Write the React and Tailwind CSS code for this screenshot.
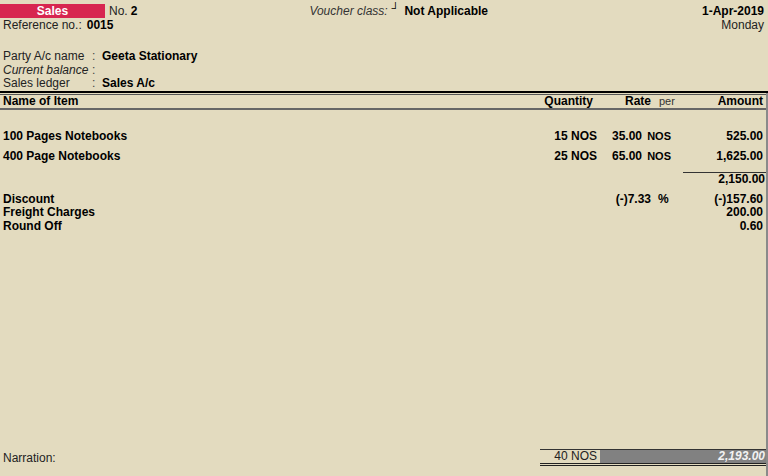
import React from 'react'

const items = [
  { name: '100 Pages Notebooks', qty: '15 NOS', rate: '35.00', per: 'NOS', amount: '525.00' },
  { name: '400 Page Notebooks', qty: '25 NOS', rate: '65.00', per: 'NOS', amount: '1,625.00' },
]

const adjustments = [
  { name: 'Discount', rate: '(-)7.33', per: '%', amount: '(-)157.60' },
  { name: 'Freight Charges', rate: '', per: '', amount: '200.00' },
  { name: 'Round Off', rate: '', per: '', amount: '0.60' },
]

const Field = ({ label, value, italic }) => (
  <div className="flex h-[13.5px] items-center">
    <span className={`w-[92px] pl-[3px] text-[#222] ${italic ? 'italic' : ''}`}>{label}</span>
    <span className="w-[10px] text-[#444]">:</span>
    <span className="font-bold text-black">{value}</span>
  </div>
)

export default function App() {
  return (
    <div className="flex h-[476px] w-[768px] flex-col overflow-hidden bg-[#e3dbbf] font-['Liberation_Sans',Arial,sans-serif] text-[12px] leading-[13px] text-[#222]">
      {/* Voucher header */}
      <div className="flex pt-[4px]">
        <div className="flex flex-1 flex-col">
          <div className="flex h-[14px] items-center">
            <div className="flex h-[14px] w-[105px] items-center justify-center bg-[#d72650] pt-px font-bold text-white">
              Sales
            </div>
            <span className="pl-[4px] pt-px text-[#222]">No.</span>
            <span className="pl-[3px] pt-px font-bold text-black">2</span>
            <span className="ml-[172px] pt-px italic text-[#333]">Voucher class:</span>
            <span className="ml-[4px] mt-[-5px] text-[11px] font-bold text-black">┘</span>
            <span className="ml-[5px] pt-px font-bold text-black">Not Applicable</span>
          </div>
          <div className="flex h-[13px] items-center pl-[3px] pt-px">
            <span>Reference no.:</span>
            <span className="pl-[5px] font-bold text-black">0015</span>
          </div>
        </div>
        <div className="flex flex-col items-end pr-[4px]">
          <div className="flex h-[14px] items-center pt-px font-bold text-black">1-Apr-2019</div>
          <div className="flex h-[13px] items-center pt-px">Monday</div>
        </div>
      </div>

      <div className="mt-[19px] flex flex-col">
        <Field label="Party A/c name" value="Geeta Stationary" />
        <Field label="Current balance" value="" italic />
        <Field label="Sales ledger" value="Sales A/c" />
      </div>

      {/* Item table */}
      <div className="h-[2px] bg-black" />
      <div className="flex flex-1 flex-col border-r-2 border-[#8a8a8a]">
        <div className="mt-px h-px bg-[#555]" />
        <div className="flex h-[13px] items-center pt-px font-bold text-black">
          <div className="w-[540px] pl-[3px]">Name of Item</div>
          <div className="w-[60px] pr-[7px] text-right">Quantity</div>
          <div className="w-[56px] pr-[5px] text-right">Rate</div>
          <div className="w-[20px] pl-[3px] text-[11px] font-normal text-[#333]">per</div>
          <div className="w-[88px] pr-[1px] text-right">Amount</div>
        </div>
        <div className="h-[2px] bg-[#666]" />

        <div className="h-[17px]" />
        {items.map((it) => (
          <div key={it.name} className="flex h-[20px] items-center font-bold text-black">
            <div className="w-[540px] pl-[3px]">{it.name}</div>
            <div className="w-[60px] pr-[3px] text-right">{it.qty}</div>
            <div className="w-[56px] pr-[14px] text-right">{it.rate}</div>
            <div className="flex w-[20px] justify-end whitespace-nowrap pr-[5px] text-[11px]">{it.per}</div>
            <div className="w-[88px] pr-[1px] text-right">{it.amount}</div>
          </div>
        ))}

        <div className="mt-[5px] flex">
          <div className="w-[683px]" />
          <div className="h-px flex-1 bg-[#333]" />
        </div>
        <div className="flex h-[12px] items-center justify-end pr-[1px] pt-px font-bold text-black">2,150.00</div>

        <div className="h-[8px]" />
        {adjustments.map((a) => (
          <div key={a.name} className="flex h-[13.5px] items-center font-bold text-black">
            <div className="w-[540px] pl-[3px]">{a.name}</div>
            <div className="w-[60px]" />
            <div className="w-[56px] pr-[5px] text-right">{a.rate}</div>
            <div className="w-[20px] pl-[2px]">{a.per}</div>
            <div className="w-[88px] pr-[1px] text-right">{a.amount}</div>
          </div>
        ))}

        <div className="flex-1" />

        {/* Footer */}
        <div className="flex h-[27px] items-start">
          <div className="flex h-[17px] w-[540px] items-center pl-[3px] pt-[2px]">Narration:</div>
          <div className="flex h-[17px] flex-1 border-b-[3px] border-t border-double border-b-[#222] border-t-[#333]">
            <div className="flex w-[60px] items-center justify-end pr-[3px]">40 NOS</div>
            <div className="flex flex-1 items-center justify-end bg-[#818181] pr-[1px] font-bold italic text-[#f2f2f2]">
              2,193.00
            </div>
          </div>
        </div>
      </div>
    </div>
  )
}
